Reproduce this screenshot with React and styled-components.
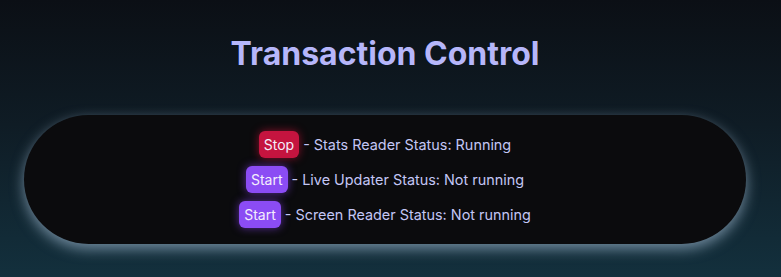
import React, { useState } from 'react'
import styled, { createGlobalStyle } from 'styled-components'

const GlobalStyle = createGlobalStyle`
  html, body {
    margin: 0;
    padding: 0;
    height: 100%;
  }
  body {
    background: linear-gradient(180deg, #0b0f15 0%, #0f1c25 45%, #13303d 100%);
    font-family: Inter, "Noto Sans", sans-serif;
    min-height: 277px;
  }
`

const services = [
  { id: 'stats', name: 'Stats Reader', running: true },
  { id: 'live', name: 'Live Updater', running: false },
  { id: 'screen', name: 'Screen Reader', running: false },
]

export default function App() {
  const [list, setList] = useState(services)

  const toggle = (id) => {
    setList(list.map(s => s.id === id ? { ...s, running: !s.running } : s))
  }

  return (
    <Page>
      <GlobalStyle />
      <Title>Transaction Control</Title>
      <Panel>
        {list.map(s => (
          <Row key={s.id}>
            <ActionButton $running={s.running} onClick={() => toggle(s.id)}>
              {s.running ? 'Stop' : 'Start'}
            </ActionButton>
            <span>- {s.name} Status: {s.running ? 'Running' : 'Not running'}</span>
          </Row>
        ))}
      </Panel>
    </Page>
  )
}

const Page = styled.div`
  display: flex;
  flex-direction: column;
  align-items: center;
  padding: 35px 35px 0 24px;
  box-sizing: border-box;
  width: 781px;
`

const Title = styled.h1`
  margin: 0;
  font-size: 32px;
  font-weight: 700;
  line-height: 38px;
  color: #b6b6fa;
  letter-spacing: 0;
`

const Panel = styled.div`
  margin-top: 42px;
  width: 722px;
  height: 129px;
  box-sizing: border-box;
  background: #0b0b0d;
  border-radius: 65px;
  box-shadow: 0 5px 14px rgba(190, 215, 240, 0.55);
  display: flex;
  flex-direction: column;
  align-items: center;
  justify-content: center;
  gap: 8px;
`

const Row = styled.div`
  display: flex;
  align-items: center;
  gap: 4px;
  font-size: 14.4px;
  color: #c3c6f5;
`

const ActionButton = styled.button`
  border: none;
  font-family: inherit;
  font-size: 14px;
  line-height: 17px;
  height: 27px;
  padding: 0 5px;
  border-radius: 6px;
  cursor: pointer;
  color: #f4eefc;
  background: ${p => p.$running ? '#c5143f' : '#8b4cf4'};
  box-shadow: 0 0 8px ${p => p.$running ? 'rgba(220, 20, 60, 0.6)' : 'rgba(140, 70, 245, 0.6)'};
`
